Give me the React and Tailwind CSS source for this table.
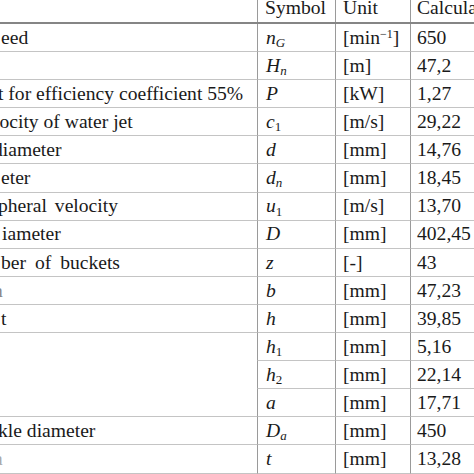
import React from "react";

const rows = [
  { label: "eed", lc: "ml-[1px]", sym: <><i>n</i><sub className="italic text-[13px]">G</sub></>, unit: <>[min<sup className="text-[12px]">−1</sup>]</>, val: "650" },
  { label: "", lc: "", sym: <><i>H</i><sub className="italic text-[13px]">n</sub></>, unit: "[m]", val: "47,2" },
  { label: "t for efficiency coefficient 55%", lc: "-ml-[2px]", sym: <i>P</i>, unit: "[kW]", val: "1,27" },
  { label: "locity of water jet", lc: "-ml-[6px]", sym: <><i>c</i><sub className="text-[13px]">1</sub></>, unit: "[m/s]", val: "29,22" },
  { label: "diameter", lc: "-ml-[7px]", sym: <i>d</i>, unit: "[mm]", val: "14,76" },
  { label: "eter", lc: "ml-[1px]", sym: <><i>d</i><sub className="italic text-[13px]">n</sub></>, unit: "[mm]", val: "18,45" },
  { label: "pheral velocity", lc: "-ml-[2px] [word-spacing:3px]", sym: <><i>u</i><sub className="text-[13px]">1</sub></>, unit: "[m/s]", val: "13,70" },
  { label: "iameter", lc: "ml-[2px]", sym: <i>D</i>, unit: "[mm]", val: "402,45" },
  { label: "ber of buckets", lc: "ml-[1px] [word-spacing:4px]", sym: <i>z</i>, unit: "[-]", val: "43" },
  { label: "n", lc: "-ml-[7px] text-[#888]", sym: <i>b</i>, unit: "[mm]", val: "47,23" },
  { label: "t", lc: "ml-[1px]", sym: <i>h</i>, unit: "[mm]", val: "39,85" },
  { label: "", lc: "", noLine: true, sym: <><i>h</i><sub className="text-[13px]">1</sub></>, unit: "[mm]", val: "5,16" },
  { label: "", lc: "", noLine: true, sym: <><i>h</i><sub className="text-[13px]">2</sub></>, unit: "[mm]", val: "22,14" },
  { label: "", lc: "", sym: <i>a</i>, unit: "[mm]", val: "17,71" },
  { label: "kle diameter", lc: "-ml-[2px]", sym: <><i>D</i><sub className="italic text-[13px]">a</sub></>, unit: "[mm]", val: "450" },
  { label: "a", lc: "-ml-[6px] text-[#aaa]", sym: <i>t</i>, unit: "[mm]", val: "13,28" },
];

export default function App() {
  return (
    <div
      className="w-[474px] h-[474px] overflow-hidden bg-white text-[#1a1a1a] text-[19.6px] leading-none"
      style={{ fontFamily: '"Liberation Serif", "Times New Roman", serif' }}
    >
      <div className="mt-[-8px] flex flex-col w-[520px]">
        <div className="flex h-[32px] border-b-2 border-[#858585]">
          <div className="w-[257px] shrink-0"></div>
          <div className="w-[78px] shrink-0 border-l border-[#9a9a9a] pl-[7px] pt-[2px] flex items-center">Symbol</div>
          <div className="w-[75px] shrink-0 border-l border-[#9a9a9a] pl-[7px] pt-[2px] flex items-center">Unit</div>
          <div className="flex-1 border-l border-[#9a9a9a] pl-[6px] pt-[2px] flex items-center whitespace-nowrap">Calculated value</div>
        </div>
        {rows.map((r, i) => (
          <div key={i} className="flex h-[28.1px]">
            <div className={`w-[257px] shrink-0 overflow-hidden flex items-center whitespace-nowrap border-b ${r.noLine ? "border-transparent" : "border-[#c4c4c4]"}`}>
              <span className={r.lc}>{r.label}</span>
            </div>
            <div className="w-[78px] shrink-0 border-l border-b border-l-[#9a9a9a] border-b-[#c4c4c4] pl-[8px] flex items-center whitespace-nowrap">
              <span>{r.sym}</span>
            </div>
            <div className="w-[75px] shrink-0 border-l border-b border-l-[#9a9a9a] border-b-[#c4c4c4] pl-[7px] flex items-center whitespace-nowrap">
              <span>{r.unit}</span>
            </div>
            <div className="flex-1 border-l border-b border-l-[#9a9a9a] border-b-[#c4c4c4] pl-[6px] flex items-center whitespace-nowrap">
              <span>{r.val}</span>
            </div>
          </div>
        ))}
      </div>
    </div>
  );
}
